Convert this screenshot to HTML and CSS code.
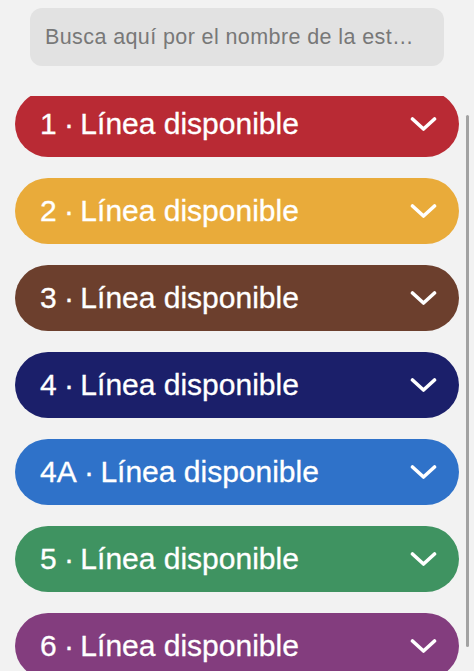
FILE: index.html
```html
<!DOCTYPE html>
<html lang="es">
<head>
<meta charset="utf-8">
<title>Líneas</title>
<link rel="stylesheet" href="styles.css">
</head>
<body>
<div class="app">
  <header class="search-area">
    <div class="search">Busca aquí por el nombre de la est…</div>
  </header>
  <main class="list-viewport">
    <ul class="lines">
      <li class="line l1"><span class="label">1<span class="sep"> · </span>Línea disponible</span><svg class="chev" viewBox="0 0 26 14"><path d="M2 2 L13 12 L24 2"/></svg></li>
      <li class="line l2"><span class="label">2<span class="sep"> · </span>Línea disponible</span><svg class="chev" viewBox="0 0 26 14"><path d="M2 2 L13 12 L24 2"/></svg></li>
      <li class="line l3"><span class="label">3<span class="sep"> · </span>Línea disponible</span><svg class="chev" viewBox="0 0 26 14"><path d="M2 2 L13 12 L24 2"/></svg></li>
      <li class="line l4"><span class="label">4<span class="sep"> · </span>Línea disponible</span><svg class="chev" viewBox="0 0 26 14"><path d="M2 2 L13 12 L24 2"/></svg></li>
      <li class="line l4a"><span class="label">4A<span class="sep"> · </span>Línea disponible</span><svg class="chev" viewBox="0 0 26 14"><path d="M2 2 L13 12 L24 2"/></svg></li>
      <li class="line l5"><span class="label">5<span class="sep"> · </span>Línea disponible</span><svg class="chev" viewBox="0 0 26 14"><path d="M2 2 L13 12 L24 2"/></svg></li>
      <li class="line l6"><span class="label">6<span class="sep"> · </span>Línea disponible</span><svg class="chev" viewBox="0 0 26 14"><path d="M2 2 L13 12 L24 2"/></svg></li>
    </ul>
    <div class="scrollbar"></div>
  </main>
</div>
</body>
</html>
```
FILE: styles.css
```css
html, body {
  margin: 0;
  padding: 0;
  background: #f2f2f2;
  font-family: "Liberation Sans", Arial, sans-serif;
}
.app {
  width: 474px;
  height: 671px;
  display: flex;
  flex-direction: column;
  overflow: hidden;
}
.search-area {
  padding: 8px 30px 30px 30px;
}
.search {
  height: 58px;
  border-radius: 12px;
  background: #e2e2e2;
  color: #787878;
  font-size: 21.5px;
  letter-spacing: 0.4px;
  line-height: 58px;
  padding-left: 15px;
  white-space: nowrap;
  overflow: hidden;
}
.list-viewport {
  position: relative;
  flex: 1;
  overflow: hidden;
}
.lines {
  list-style: none;
  margin: -5px 0 0 0;
  padding: 0 15px;
  display: flex;
  flex-direction: column;
  gap: 21px;
}
.line {
  height: 66px;
  border-radius: 33px;
  display: flex;
  align-items: center;
  justify-content: space-between;
  padding: 0 22px 0 25px;
  color: #fff;
  font-size: 30px;
}
.label {
  line-height: 1;
  -webkit-text-stroke: 0.3px #fff;
}
.sep {
  margin: 0 -2px 0 -1px;
}
.chev {
  width: 27px;
  height: 14px;
  fill: none;
  stroke: #fff;
  stroke-width: 3.6;
  stroke-linecap: round;
  stroke-linejoin: round;
}
.l1 { background: #b92a34; }
.l2 { background: #e9ab3a; }
.l3 { background: #6c3f2d; }
.l4 { background: #1b1f6a; }
.l4a { background: #2f72c9; }
.l5 { background: #3f9361; }
.l6 { background: #833d7e; }
.scrollbar {
  position: absolute;
  right: 5px;
  top: 19px;
  width: 3px;
  height: 532px;
  border-radius: 2px;
  background: #a2a2a2;
}
```
